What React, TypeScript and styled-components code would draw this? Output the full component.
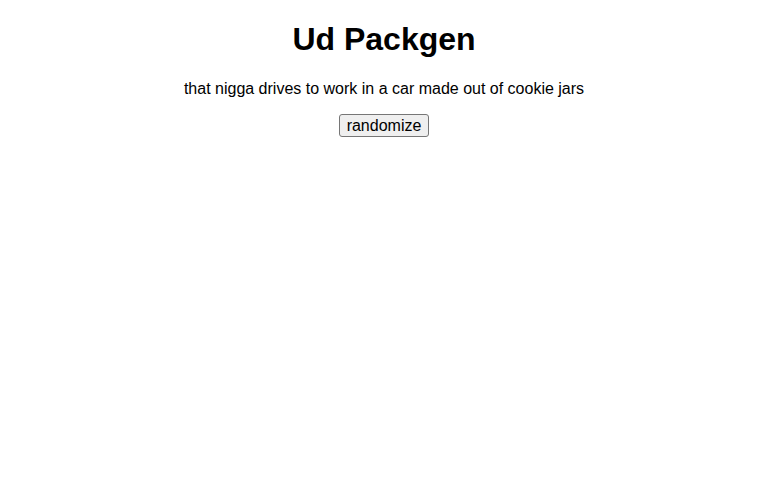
import React, { useState } from "react";
import styled, { createGlobalStyle } from "styled-components";

const GlobalStyle = createGlobalStyle`
  html, body {
    background: #ffffff;
  }
  body {
    margin: 0 8px;
    font-family: "Liberation Sans", Arial, sans-serif;
    color: #000000;
  }
`;

const Page = styled.main`
  text-align: center;
`;

const Title = styled.h1`
  font-size: 32px;
  font-weight: bold;
  margin: 21.44px 0;
`;

const Line = styled.p`
  font-size: 16px;
  margin: 16px 0;
`;

const Randomize = styled.button`
  font-family: "Liberation Sans", Arial, sans-serif;
  font-size: 16px;
  color: #000000;
  background: #efefef;
  border: 1px solid #767676;
  border-radius: 3px;
  padding: 1px 7px;
  height: 23px;
  line-height: 19px;
  cursor: pointer;
`;

const lines = [
  "that nigga drives to work in a car made out of cookie jars",
];

export default function App() {
  const [index, setIndex] = useState(0);
  return (
    <>
      <GlobalStyle />
      <Page>
        <Title>Ud Packgen</Title>
        <Line>{lines[index]}</Line>
        <Randomize onClick={() => setIndex((index + 1) % lines.length)}>
          randomize
        </Randomize>
      </Page>
    </>
  );
}
